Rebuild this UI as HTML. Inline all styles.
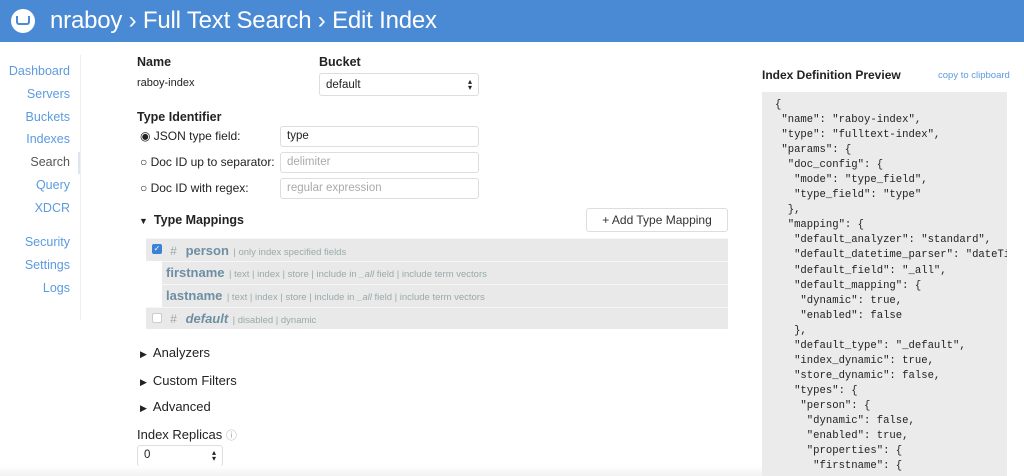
<!DOCTYPE html>
<html><head><meta charset="utf-8"><style>
*{margin:0;padding:0;box-sizing:border-box}
body{width:1024px;height:476px;overflow:hidden;background:#fff;font-family:"Liberation Sans",sans-serif;color:#222;position:relative}
.a{position:absolute;white-space:nowrap}
.hdr{left:0;top:0;width:1024px;height:42px;background:#4a8ad5}
.nav{right:954px;font-size:12.5px;color:#5b9be0;text-align:right}
.b{font-weight:bold;font-size:12.5px}
.inp{border:1px solid #ddd;border-radius:3px;background:#fff;font-size:11.5px;padding:3px 6px;height:21px}
.row{background:#e9e9e9;border-top:1px solid #f6f6f6}
.g{color:#9aa;font-size:9.5px}
.f{color:#6d8fa3;font-weight:bold;font-size:13px}
.tri{font-size:9px;margin-right:6px}
pre{font-family:"Liberation Mono",monospace;font-size:10.6px;line-height:15.05px;color:#222}
</style></head><body>
<div class="a hdr"></div>
<div class="a" style="left:11px;top:9px;width:24px;height:24px;border-radius:50%;background:#fff"></div>
<div class="a" style="left:16px;top:16px;width:14px;height:9px;border:2.5px solid #4a8ad5;border-top:none;border-radius:0 0 3px 3px"></div>
<div class="a" style="left:50px;top:7px;font-size:24px;color:#fff;letter-spacing:-0.2px">nraboy › Full Text Search › Edit Index</div>

<div class="a" style="left:80px;top:55px;width:1px;height:265px;background:#eee"></div>
<div class="a" style="left:78px;top:152px;width:2px;height:22px;background:#dde6f0"></div>
<div class="a nav" style="top:64px">Dashboard</div>
<div class="a nav" style="top:87px">Servers</div>
<div class="a nav" style="top:110px">Buckets</div>
<div class="a nav" style="top:132px">Indexes</div>
<div class="a nav" style="top:155px;color:#555">Search</div>
<div class="a nav" style="top:178px">Query</div>
<div class="a nav" style="top:201px">XDCR</div>
<div class="a nav" style="top:235px">Security</div>
<div class="a nav" style="top:258px">Settings</div>
<div class="a nav" style="top:281px">Logs</div>

<div class="a b" style="left:137px;top:55px">Name</div>
<div class="a" style="left:137px;top:77px;font-size:11px">raboy-index</div>
<div class="a b" style="left:319px;top:55px">Bucket</div>
<div class="a inp" style="left:319px;top:73px;width:160px;height:23px;padding-top:5px">default<span style="float:right;font-size:8px;line-height:6px">▴<br>▾</span></div>
<div class="a b" style="left:137px;top:110px">Type Identifier</div>
<div class="a" style="left:140px;top:129px;font-size:12px">◉ JSON type field:</div>
<div class="a" style="left:140px;top:155px;font-size:12px">○ Doc ID up to separator:</div>
<div class="a" style="left:140px;top:181px;font-size:12px">○ Doc ID with regex:</div>
<div class="a inp" style="left:280px;top:126px;width:199px">type</div>
<div class="a inp" style="left:280px;top:152px;width:199px;color:#aaa">delimiter</div>
<div class="a inp" style="left:280px;top:178px;width:199px;color:#aaa">regular expression</div>

<div class="a b" style="left:139px;top:213px"><span class="tri">▼</span>Type Mappings</div>
<div class="a inp" style="left:586px;top:208px;width:142px;height:24px;font-size:12px;text-align:center;padding-top:4px;color:#333">+ Add Type Mapping</div>
<div class="a row" style="left:146px;top:238px;width:582px;height:23px"></div>
<div class="a row" style="left:162px;top:261px;width:566px;height:23px"></div>
<div class="a row" style="left:162px;top:284px;width:566px;height:23px"></div>
<div class="a row" style="left:146px;top:307px;width:582px;height:22px"></div>
<div class="a" style="left:152px;top:244px;width:10px;height:10px;background:#3b82d6;border-radius:2px;color:#fff;font-size:8px;line-height:10px;text-align:center">✓</div>
<div class="a" style="left:152px;top:313px;width:10px;height:10px;background:#fff;border:1px solid #ccc;border-radius:2px"></div>
<div class="a" style="left:170px;top:242px"><span class="g" style="font-size:12px;font-style:italic">#</span>&nbsp; <span class="f">person</span> <span class="g">| only index specified fields</span></div>
<div class="a" style="left:166px;top:264px"><span class="f">firstname</span> <span class="g">| text | index | store | include in <i>_all</i> field | include term vectors</span></div>
<div class="a" style="left:166px;top:287px"><span class="f">lastname</span> <span class="g">| text | index | store | include in <i>_all</i> field | include term vectors</span></div>
<div class="a" style="left:170px;top:310px"><span class="g" style="font-size:12px;font-style:italic">#</span>&nbsp; <span class="f" style="font-style:italic">default</span> <span class="g">| disabled | dynamic</span></div>

<div class="a b" style="left:140px;top:345px;font-weight:normal;font-size:13px"><span class="tri">▶</span>Analyzers</div>
<div class="a b" style="left:140px;top:373px;font-weight:normal;font-size:13px"><span class="tri">▶</span>Custom Filters</div>
<div class="a b" style="left:140px;top:399px;font-weight:normal;font-size:13px"><span class="tri">▶</span>Advanced</div>
<div class="a" style="left:137px;top:427px;font-size:13px">Index Replicas <span style="color:#aaa;font-size:11px">ⓘ</span></div>
<div class="a inp" style="left:137px;top:445px;width:86px;height:22px">0<span style="float:right;font-size:8px;line-height:6px;margin-top:1px">▴<br>▾</span></div>
<div class="a" style="left:0;top:466px;width:762px;height:10px;background:linear-gradient(#fff,#f2f2f2)"></div>

<div class="a b" style="left:762px;top:68px;font-size:12px">Index Definition Preview</div>
<div class="a" style="left:938px;top:70px;font-size:9.5px;color:#5b9be0">copy to clipboard</div>
<div class="a" style="left:762px;top:92px;width:245px;height:384px;background:#ebebeb;overflow:hidden">
<pre style="margin:6px 0 0 13px">{
 "name": "raboy-index",
 "type": "fulltext-index",
 "params": {
  "doc_config": {
   "mode": "type_field",
   "type_field": "type"
  },
  "mapping": {
   "default_analyzer": "standard",
   "default_datetime_parser": "dateTime",
   "default_field": "_all",
   "default_mapping": {
    "dynamic": true,
    "enabled": false
   },
   "default_type": "_default",
   "index_dynamic": true,
   "store_dynamic": false,
   "types": {
    "person": {
     "dynamic": false,
     "enabled": true,
     "properties": {
      "firstname": {</pre></div>
</body></html>
